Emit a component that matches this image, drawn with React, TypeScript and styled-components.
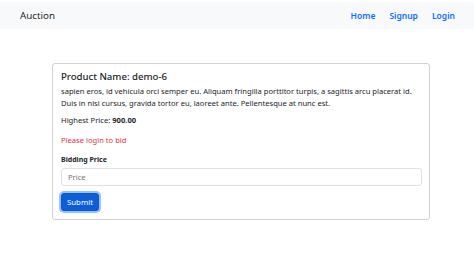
import React from 'react';
import styled, { createGlobalStyle } from 'styled-components';

const GlobalStyle = createGlobalStyle`
  html, body {
    margin: 0;
    padding: 0;
    background: #ffffff;
  }
  body {
    font-family: "Noto Sans", "Liberation Sans", sans-serif;
    font-size: 7.6px;
    line-height: 12px;
    color: #212529;
  }
  * {
    box-sizing: border-box;
  }
`;

const Navbar = styled.nav`
  margin-top: 2px;
  height: 27px;
  background: #f8f9fa;
  display: flex;
  align-items: center;
  justify-content: space-between;
  padding: 0 12px 0 20px;
`;

const Brand = styled.a`
  font-size: 9.8px;
  color: rgba(0, 0, 0, 0.9);
  text-decoration: none;
`;

const NavList = styled.ul`
  display: flex;
  list-style: none;
  margin: 0;
  padding: 0;
`;

const NavLink = styled.a`
  display: block;
  padding: 0 7px;
  font-size: 8.5px;
  font-weight: 600;
  color: #0d6efd;
  text-decoration: none;
`;

const Main = styled.main`
  padding: 34px 44px 0 52px;
`;

const Card = styled.div`
  width: 378px;
  border: 1px solid rgba(0, 0, 0, 0.175);
  border-radius: 3px;
  padding: 7px 8px 8px;
`;

const Title = styled.h5`
  margin: 0 0 2px;
  font-size: 9.6px;
  font-weight: 500;
  line-height: 1.2;
`;

const Text = styled.p<{ $tone?: 'danger'; $gap?: number }>`
  margin: 0 0 ${(p) => p.$gap ?? 7}px;
  color: ${(p) => (p.$tone === 'danger' ? '#dc3545' : '#212529')};
`;

const Label = styled.label`
  display: block;
  margin: 8px 0 2px;
  font-size: 7px;
  font-weight: 700;
`;

const Input = styled.input`
  display: block;
  width: 361px;
  height: 18px;
  padding: 0 6px;
  font-family: inherit;
  font-size: 7.6px;
  color: #212529;
  border: 1px solid #dee2e6;
  border-radius: 3px;
  outline: none;
  &::placeholder {
    color: #6c757d;
  }
`;

const Button = styled.button`
  display: block;
  margin-top: 7px;
  height: 18px;
  padding: 0 5px;
  font-family: inherit;
  font-size: 7.8px;
  color: #ffffff;
  background: #0b5ed7;
  border: 1px solid #0a58ca;
  border-radius: 3px;
  box-shadow: 0 0 0 2px rgba(49, 132, 253, 0.5);
`;

export default function App() {
  return (
    <>
      <GlobalStyle />
      <Navbar>
        <Brand href="#">Auction</Brand>
        <NavList>
          <li><NavLink href="#">Home</NavLink></li>
          <li><NavLink href="#">Signup</NavLink></li>
          <li><NavLink href="#">Login</NavLink></li>
        </NavList>
      </Navbar>
      <Main>
        <Card>
          <Title>Product Name: demo-6</Title>
          <Text $gap={5}>
            sapien eros, id vehicula orci semper eu. Aliquam fringilla porttitor turpis, a sagittis arcu placerat id.
            Duis in nisi cursus, gravida tortor eu, laoreet ante. Pellentesque at nunc est.
          </Text>
          <Text $gap={8}>
            Highest Price: <b>900.00</b>
          </Text>
          <Text $tone="danger">Please login to bid</Text>
          <Label htmlFor="price">Bidding Price</Label>
          <Input id="price" placeholder="Price" />
          <Button type="button">Submit</Button>
        </Card>
      </Main>
    </>
  );
}
